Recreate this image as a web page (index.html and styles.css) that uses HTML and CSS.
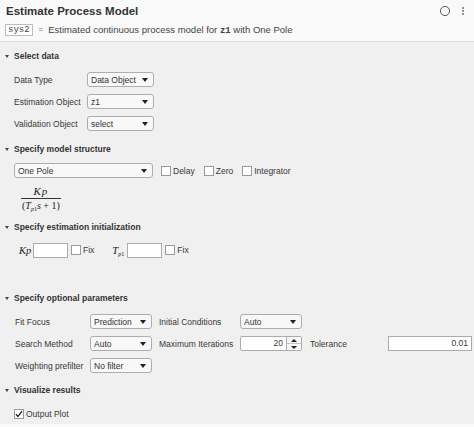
FILE: index.html
```html
<!DOCTYPE html>
<html lang="en">
<head>
<meta charset="UTF-8">
<title>Estimate Process Model</title>
<link rel="stylesheet" href="styles.css">
</head>
<body>
    <div class="header">
        <div class="title-row">
            <h1>Estimate Process Model</h1>
            <svg class="icon-circle" width="12" height="12" viewBox="0 0 12 12">
                <circle cx="6" cy="6" r="4.6" fill="none" stroke="#5a5a5a" stroke-width="1"/>
            </svg>
            <svg class="icon-kebab" width="4" height="12" viewBox="0 0 4 12">
                <circle cx="2" cy="3" r="0.9" fill="#666"/>
                <circle cx="2" cy="6" r="0.9" fill="#666"/>
                <circle cx="2" cy="9" r="0.9" fill="#666"/>
            </svg>
        </div>
        <div class="summary">
            <span class="var-name">sys2</span>
            <span class="eq">=</span>
            <span>Estimated continuous process model for <code>z1</code> with One Pole</span>
        </div>
    </div>

    <div class="main">
        <!-- data selection -->
        <div class="section sec-data">
            <div class="section-head"><span class="caret"></span>Select data</div>
            <div class="section-body">
                <div class="form-row">
                    <span class="lbl">Data Type</span>
                    <div class="select">Data Object<span class="arrow"></span></div>
                </div>
                <div class="form-row">
                    <span class="lbl">Estimation Object</span>
                    <div class="select">z1<span class="arrow"></span></div>
                </div>
                <div class="form-row">
                    <span class="lbl">Validation Object</span>
                    <div class="select">select<span class="arrow"></span></div>
                </div>
            </div>
        </div>

        <!-- model structure -->
        <div class="section sec-structure">
            <div class="section-head"><span class="caret"></span>Specify model structure</div>
            <div class="section-body">
                <div class="form-row">
                    <div class="select select-wide">One Pole<span class="arrow"></span></div>
                    <div class="checks">
                        <label class="check"><span class="box"></span>Delay</label>
                        <label class="check"><span class="box"></span>Zero</label>
                        <label class="check"><span class="box"></span>Integrator</label>
                    </div>
                </div>
                <div class="fraction">
                    <div class="num"><i>K</i><i>p</i></div>
                    <div class="den">(<i>T</i><sub><i>p</i>1</sub><i>s</i> + 1)</div>
                </div>
            </div>
        </div>

        <!-- initial values -->
        <div class="section sec-init">
            <div class="section-head"><span class="caret"></span>Specify estimation initialization</div>
            <div class="section-body">
                <div class="form-row init-row">
                    <span class="sym sym-k"><i>K</i><i>p</i></span>
                    <span class="input input-short"></span>
                    <label class="check fix"><span class="box"></span>Fix</label>
                    <span class="sym sym-t"><i>T</i><sub><i>p</i>1</sub></span>
                    <span class="input input-short"></span>
                    <label class="check fix"><span class="box"></span>Fix</label>
                </div>
            </div>
        </div>

        <!-- optional parameters -->
        <div class="section sec-options">
            <div class="section-head"><span class="caret"></span>Specify optional parameters</div>
            <div class="section-body">
                <div class="form-row opt-row">
                    <span class="lbl lbl-opt">Fit Focus</span>
                    <div class="select select-opt">Prediction<span class="arrow"></span></div>
                    <span class="lbl lbl-mid">Initial Conditions</span>
                    <div class="select select-opt">Auto<span class="arrow"></span></div>
                </div>
                <div class="form-row opt-row">
                    <span class="lbl lbl-opt">Search Method</span>
                    <div class="select select-opt">Auto<span class="arrow"></span></div>
                    <span class="lbl lbl-mid">Maximum Iterations</span>
                    <div class="spinner">
                        <span class="spin-value">20</span>
                        <span class="spin-btns">
                            <span class="spin-up"></span>
                            <span class="spin-down"></span>
                        </span>
                    </div>
                    <span class="lbl lbl-tol">Tolerance</span>
                    <span class="input input-tol">0.01</span>
                </div>
                <div class="form-row opt-row">
                    <span class="lbl lbl-opt">Weighting prefilter</span>
                    <div class="select select-opt">No filter<span class="arrow"></span></div>
                </div>
            </div>
        </div>

        <!-- results -->
        <div class="section sec-results">
            <div class="section-head"><span class="caret"></span>Visualize results</div>
            <div class="section-body">
                <div class="form-row">
                    <label class="check"><span class="box checked">
                        <svg width="8" height="8" viewBox="0 0 8 8"><path d="M1 4.2 L3 6.4 L7 1.2" fill="none" stroke="#222" stroke-width="1.3"/></svg>
                    </span>Output Plot</label>
                </div>
            </div>
        </div>
    </div>
</body>
</html>
```

FILE: styles.css
```css
html, body {
    margin: 0;
    padding: 0;
}

body {
    width: 474px;
    height: 427px;
    overflow: hidden;
    background-color: #f9f9f9;
    font-family: "Liberation Sans", Arial, sans-serif;
    font-size: 8.5px;
    color: #383838;
}

/* top title block */
.header {
    height: 41px;
    background-color: #f9f9f9;
    border-bottom: 1px solid #dedede;
    padding: 0 9px 0 5px;
}
.title-row {
    display: flex;
    align-items: center;
    height: 21px;
}
.title-row h1 {
    flex: 1;
    margin: 0 0 0 1px;
    font-size: 11.5px;
    font-weight: bold;
    color: #333;
}
.icon-circle {
    display: block;
    margin-right: 10px;
}
.icon-kebab {
    display: block;
}
.summary {
    display: flex;
    align-items: center;
    height: 17px;
    font-size: 9.5px;
    color: #444;
}
.var-name {
    font-family: "Liberation Mono", monospace;
    font-size: 9px;
    line-height: 10px;
    padding: 0 2px;
    border: 1px solid #bcbcbc;
    background-color: #fdfdfd;
    color: #444;
}
.eq {
    margin: 0 5px 0 6px;
    color: #777;
    font-size: 8px;
}
.summary code {
    font-family: "Liberation Mono", monospace;
    font-weight: bold;
    font-size: 9px;
}

/* collapsible sections */
.main {
    height: 382px;
    background-color: #f0f0f0;
}
.section-head {
    display: flex;
    align-items: center;
    height: 16px;
    padding-left: 5px;
    font-weight: bold;
    color: #333;
}
.caret {
    width: 0;
    height: 0;
    border-left: 2.5px solid transparent;
    border-right: 2.5px solid transparent;
    border-top: 3px solid #444;
    margin-right: 5px;
}
.section-body {
    display: flex;
    flex-direction: column;
    gap: 7px;
}
.sec-data {
    padding-top: 6px;
}
.sec-data .section-body {
    padding: 8px 0 10px 14px;
}
.sec-structure .section-body {
    padding: 6px 0 6px 14px;
    gap: 7px;
}
.sec-init .section-body {
    padding: 7px 0 32px 19px;
}
.sec-options .section-body {
    padding: 8px 0 9px 15px;
}
.sec-results .section-body {
    padding: 8px 0 0 14px;
}

.form-row {
    display: flex;
    align-items: center;
    height: 15px;
}
.lbl {
    width: 73px;
    flex: none;
    white-space: nowrap;
}

/* drop-down boxes */
.select {
    flex: none;
    box-sizing: border-box;
    width: 67px;
    height: 15px;
    display: flex;
    align-items: center;
    justify-content: space-between;
    padding: 0 5px 0 3px;
    border: 1px solid #adadad;
    border-radius: 3px;
    background-color: #f8f8f8;
    color: #333;
}
.arrow {
    width: 0;
    height: 0;
    border-left: 3px solid transparent;
    border-right: 3px solid transparent;
    border-top: 4px solid #222;
}
.select-wide {
    width: 139px;
}

/* check boxes */
.checks {
    display: flex;
    gap: 9px;
    margin-left: 8px;
}
.check {
    display: flex;
    align-items: center;
    gap: 2px;
}
.box {
    box-sizing: border-box;
    width: 10px;
    height: 10px;
    border: 1px solid #9a9a9a;
    background-color: #fff;
    display: flex;
    align-items: center;
    justify-content: center;
}
.box svg {
    display: block;
}

/* transfer function */
.fraction {
    display: inline-flex;
    flex-direction: column;
    align-items: center;
    align-self: flex-start;
    margin-left: 7px;
    font-family: "Liberation Serif", "Times New Roman", serif;
    font-size: 10px;
    color: #222;
}
.fraction .num {
    font-size: 11px;
    line-height: 12px;
    letter-spacing: 1px;
    padding-bottom: 1px;
    width: 100%;
    text-align: center;
    border-bottom: 1px solid #333;
}
.fraction .den {
    line-height: 14px;
    padding: 0 1px;
}
sub {
    font-size: 6px;
    vertical-align: -2px;
    line-height: 0;
}

/* initial value row */
.init-row {
    height: 16px;
}
.sym {
    flex: none;
    font-family: "Liberation Serif", "Times New Roman", serif;
    font-size: 10.5px;
    color: #222;
}
.sym-k {
    width: 14px;
}
.sym-t {
    width: 15px;
    margin-left: 18px;
}
.input {
    flex: none;
    box-sizing: border-box;
    height: 15px;
    border: 1px solid #ababab;
    background-color: #fff;
}
.input-short {
    width: 35px;
}
.fix {
    margin-left: 3px;
}

/* optional parameter rows */
.lbl-opt {
    width: 75px;
}
.select-opt {
    width: 62px;
}
.lbl-mid {
    width: 81px;
    margin-left: 7px;
}
.lbl-tol {
    width: 78px;
    margin-left: 8px;
}
.spinner {
    flex: none;
    box-sizing: border-box;
    width: 62px;
    height: 15px;
    display: flex;
    border: 1px solid #ababab;
    border-radius: 2px;
    background-color: #fff;
}
.spin-value {
    flex: 1;
    text-align: right;
    padding-right: 3px;
    line-height: 13px;
}
.spin-btns {
    width: 14px;
    display: flex;
    flex-direction: column;
    border-left: 1px solid #ababab;
    background-color: #f8f8f8;
}
.spin-up, .spin-down {
    flex: 1;
    display: flex;
    align-items: center;
    justify-content: center;
}
.spin-up {
    border-bottom: 1px solid #c4c4c4;
}
.spin-up::after {
    content: "";
    border-left: 3px solid transparent;
    border-right: 3px solid transparent;
    border-bottom: 3px solid #222;
}
.spin-down::after {
    content: "";
    border-left: 3px solid transparent;
    border-right: 3px solid transparent;
    border-top: 3px solid #222;
}
.input-tol {
    width: 84px;
    text-align: right;
    padding-right: 3px;
    line-height: 13px;
}
```
